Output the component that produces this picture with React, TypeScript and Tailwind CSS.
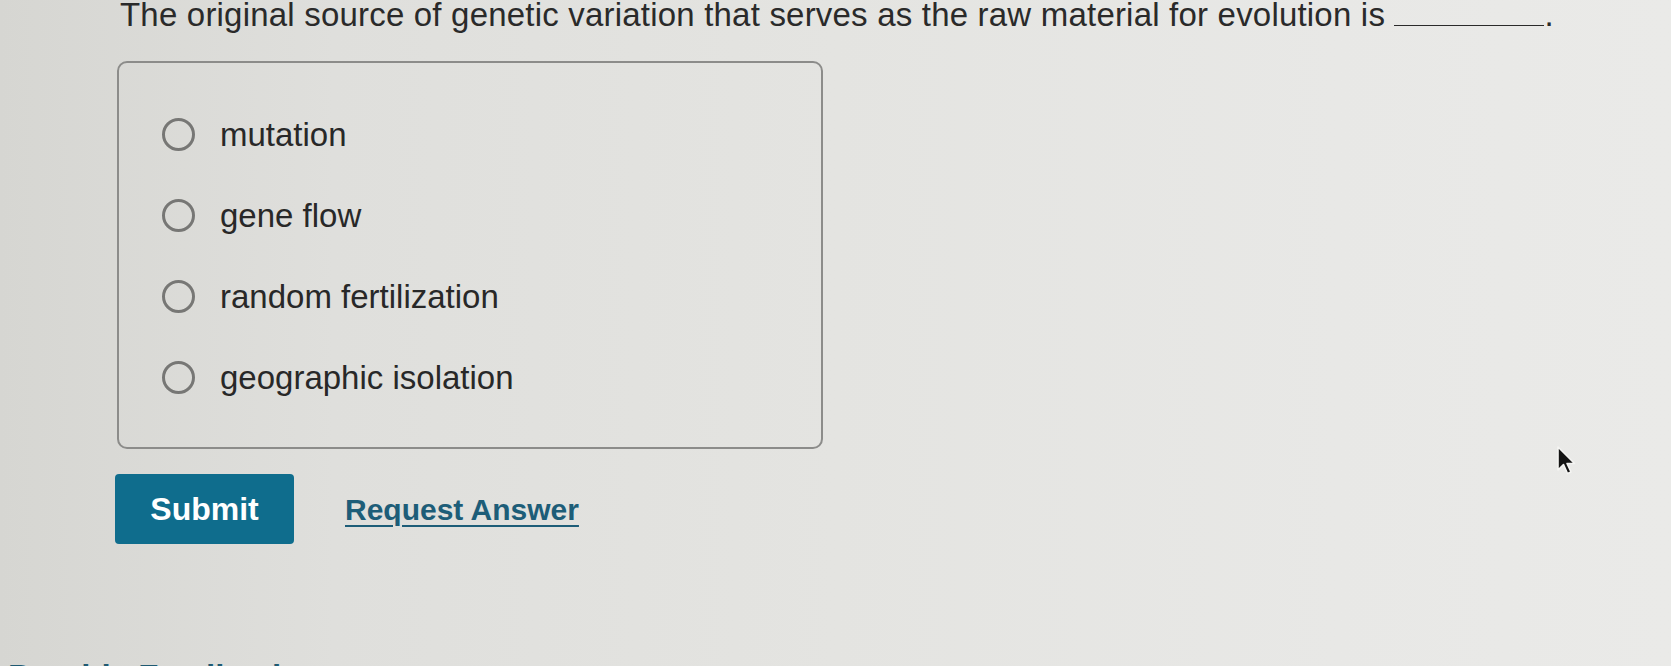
import React from 'react';

const options = ['mutation', 'gene flow', 'random fertilization', 'geographic isolation'];

function Cursor() {
  return (
    <svg width="22" height="32" viewBox="0 0 22 32" className="absolute left-[1556px] top-[445px]">
      <path
        d="M2 2 L2 25 L7.5 19.5 L11.5 28.5 L15 27 L11 18.5 L18.5 18.5 Z"
        fill="#141414"
        stroke="#f4f4f2"
        strokeWidth="1.6"
        strokeLinejoin="round"
      />
    </svg>
  );
}

export default function App() {
  return (
    <div className="relative w-full h-[666px] overflow-hidden bg-[linear-gradient(90deg,#d6d6d2_0%,#dfdfdc_20%,#e4e4e1_50%,#e8e8e6_80%,#eaeae8_100%)] font-['Liberation_Sans',Arial,sans-serif] text-[#262626]">
      {/* Question */}
      <div className="pl-[120px]">
        <p className="text-[33px] leading-[30px] tracking-[0.2px] whitespace-nowrap text-[#2a2a2a]">
          The original source of genetic variation that serves as the raw material for evolution is{' '}
          <span className="inline-block w-[150px] border-b-[1.5px] border-[#2a2a2a] align-baseline" />.
        </p>

        {/* Options */}
        <div className="mt-[31px] -ml-[3px] w-[706px] h-[388px] border-2 border-[#8c8c8a] rounded-[10px] pl-[43px] pt-[31px]">
          {options.map((opt) => (
            <label key={opt} className="flex items-center h-[81px] gap-[25px] cursor-pointer">
              <span className="w-[33px] h-[33px] rounded-full border-[3px] border-[#777775] shrink-0" />
              <span className="text-[33px] leading-none text-[#282828]">{opt}</span>
            </label>
          ))}
        </div>

        {/* Actions */}
        <div className="mt-[25px] -ml-[5px] flex items-center gap-[51px]">
          <button className="w-[179px] h-[70px] rounded-[4px] bg-[#0f6d8d] text-white text-[32px] font-bold">
            Submit
          </button>
          <a href="#" className="text-[30px] font-bold text-[#1d5d78] underline underline-offset-[5px] decoration-[2px]">
            Request Answer
          </a>
        </div>
      </div>

      {/* Feedback heading (cut off at the bottom) */}
      <div className="pl-[8px] mt-[117px]">
        <h2 className="text-[33px] leading-[32px] font-bold text-[#1f5a72]">Provide Feedback</h2>
      </div>

      <Cursor />
    </div>
  );
}
